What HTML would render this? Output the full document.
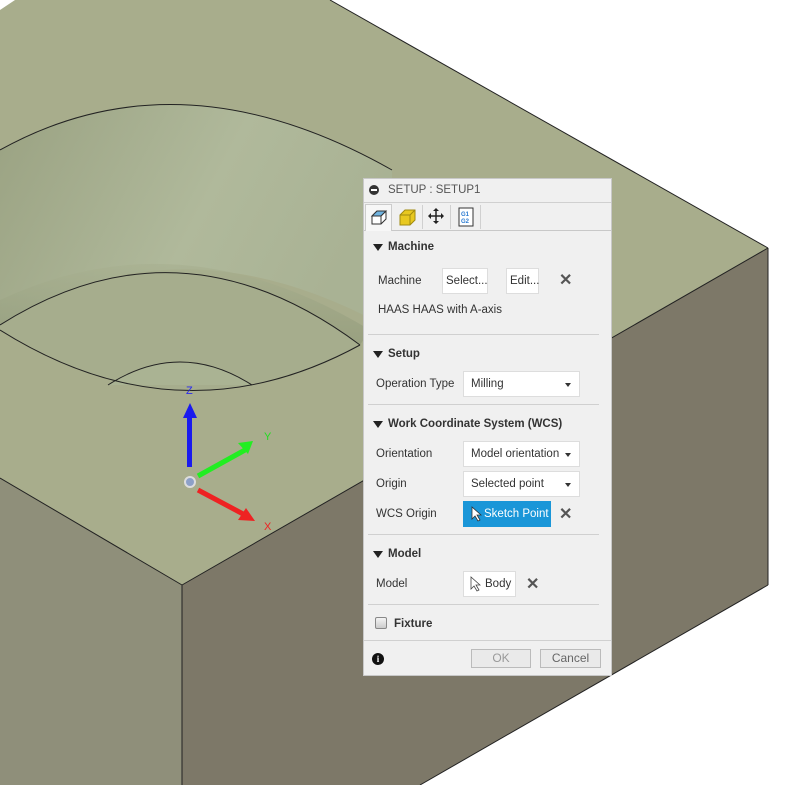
<!DOCTYPE html>
<html><head><meta charset="utf-8"><style>
*{margin:0;padding:0;box-sizing:border-box}
body{width:799px;height:785px;overflow:hidden;background:#fff;position:relative;font-family:"Liberation Sans",Arial,sans-serif;font-size:11.5px;color:#333}
.a{position:absolute;white-space:nowrap}
.t{line-height:14px}
.h{font-weight:bold;font-size:11.5px;color:#333}
.tri{position:absolute;width:0;height:0;border-left:5px solid transparent;border-right:5px solid transparent;border-top:7px solid #222}
.btn{position:absolute;background:#fff;border:1px solid #ddd;line-height:24px;padding-left:3px;color:#333}
.dd{position:absolute;background:#fff;border:1px solid #ddd;line-height:24px;padding-left:7px;color:#333}
.dd:after{content:"";position:absolute;right:8px;top:11px;border-left:3px solid transparent;border-right:3px solid transparent;border-top:4px solid #333}
.ln{position:absolute;left:368px;width:231px;height:1px;background:#d0d0d0}
.x{position:absolute;font-size:16px;color:#555;font-weight:bold;line-height:16px}
</style></head><body>
<svg class="a" style="left:0;top:0" width="799" height="785">
<defs>
<linearGradient id="g1" x1="0" y1="0" x2="1" y2="0.3"><stop offset="0" stop-color="#9aa282"/><stop offset="0.6" stop-color="#b0b99b"/><stop offset="1" stop-color="#a9b294"/></linearGradient>
<linearGradient id="g2" x1="0" y1="0" x2="0" y2="1"><stop offset="0" stop-color="#a8b090"/><stop offset="1" stop-color="#8f9878"/></linearGradient>
</defs>
<polygon points="15,0 330,0 768,248 182,585 0,478 0,10" fill="#a8ad8c"/>
<polygon points="0,478 182,585 182,785 0,785" fill="#8f8f7a"/>
<polygon points="182,585 768,248 768,585 420,785 182,785" fill="#7d7868"/>
<path d="M0,150 Q180,50 392,170 L392,330 Q180,211 0,325 Z" fill="url(#g1)"/>
<path d="M0,325 Q180,211 360,345 Q180,443 0,330 Z" fill="#a6ad8d"/>
<path d="M0,300 Q180,215 370,330 L360,345 Q180,211 0,325 Z" fill="url(#g2)" opacity="0.6"/>
<path d="M108,385 Q180,339 252,385 Z" fill="#aab393"/>
<line x1="330" y1="0" x2="768" y2="248" stroke="#222" stroke-width="1"/>
<line x1="0" y1="478" x2="182" y2="585" stroke="#222"/>
<line x1="182" y1="585" x2="768" y2="248" stroke="#222"/>
<line x1="182" y1="585" x2="182" y2="785" stroke="#222"/>
<line x1="768" y1="248" x2="768" y2="585" stroke="#222"/>
<line x1="768" y1="585" x2="420" y2="785" stroke="#222"/>
<path d="M0,150 Q180,50 392,170" fill="none" stroke="#222"/>
<path d="M0,325 Q180,211 360,345" fill="none" stroke="#222"/>
<path d="M0,330 Q180,443 360,345" fill="none" stroke="#222"/>
<path d="M108,385 Q180,339 252,385" fill="none" stroke="#222"/>
<rect x="187" y="415" width="5" height="52" fill="#1a1aee"/>
<polygon points="183,418 190,403 197,418" fill="#1a1aee"/>
<text x="186" y="394" font-size="11" fill="#2a2aee" font-family="Liberation Sans">Z</text>
<line x1="198" y1="476" x2="245" y2="450" stroke="#22ee22" stroke-width="5"/>
<polygon points="238,443 253,441 248,454" fill="#22ee22"/>
<text x="264" y="440" font-size="11" fill="#22dd22" font-family="Liberation Sans">Y</text>
<line x1="198" y1="490" x2="245" y2="515" stroke="#ee2222" stroke-width="5"/>
<polygon points="238,520 255,521 246,508" fill="#ee2222"/>
<text x="264" y="530" font-size="11" fill="#ee2222" font-family="Liberation Sans">X</text>
<circle cx="190" cy="482" r="5" fill="#8da0c8" stroke="#ddd" stroke-width="2"/>
</svg>

<div class="a" style="left:363px;top:178px;width:249px;height:498px;background:#f0f0f0;border:1px solid #c8c8c8"></div>
<div class="a" style="left:369px;top:185px;width:10px;height:10px;border-radius:50%;background:#333"></div>
<div class="a" style="left:371px;top:189px;width:6px;height:2px;background:#fff"></div>
<div class="a t" style="left:388px;top:183px;color:#555">SETUP : SETUP1</div>
<div class="a" style="left:364px;top:202px;width:247px;height:1px;background:#d0d0d0"></div>
<div class="a" style="left:364px;top:230px;width:247px;height:1px;background:#c8c8c8"></div>
<div class="a" style="left:365px;top:204px;width:27px;height:27px;background:#f7f7f7;border:1px solid #ccc;border-bottom:none"></div>
<div class="a" style="left:422px;top:205px;width:1px;height:24px;background:#d0d0d0"></div>
<div class="a" style="left:450px;top:205px;width:1px;height:24px;background:#d0d0d0"></div>
<div class="a" style="left:480px;top:205px;width:1px;height:24px;background:#d0d0d0"></div>
<svg class="a" style="left:369px;top:207px" width="20" height="20"><path d="M3,9 L8,4 L17,4 L17,12 L12,17 L3,17 Z M3,9 L12,9 L12,17 M12,9 L17,4" fill="#fff" stroke="#333"/><path d="M8,4 L17,4 L12,9 L3,9 Z" fill="#6fb3e0" stroke="#333"/></svg>
<svg class="a" style="left:398px;top:207px" width="20" height="20"><path d="M2,8 L7,3 L17,3 L17,13 L12,18 L2,18 Z" fill="#e8c820" stroke="#a08a10"/><path d="M2,8 L12,8 L17,3 M12,8 L12,18" fill="none" stroke="#a08a10"/></svg>
<svg class="a" style="left:427px;top:207px" width="18" height="18"><path d="M9,2 V16 M2,9 H16" stroke="#222" stroke-width="1.5"/><path d="M9,1 L6,4 H12 Z M9,17 L6,14 H12 Z M1,9 L4,6 V12 Z M17,9 L14,6 V12 Z" fill="#222"/></svg>
<svg class="a" style="left:458px;top:207px" width="16" height="20"><rect x="1" y="1" width="14" height="18" fill="#fff" stroke="#333"/><text x="3" y="9" font-size="6" fill="#2a7ad0" font-family="Liberation Sans" font-weight="bold">G1</text><text x="3" y="16" font-size="6" fill="#2a7ad0" font-family="Liberation Sans" font-weight="bold">G2</text></svg>

<div class="tri" style="left:373px;top:244px"></div>
<div class="a t h" style="left:388px;top:240px">Machine</div>
<div class="a t" style="left:378px;top:274px">Machine</div>
<div class="btn" style="left:442px;top:268px;width:46px;height:26px">Select...</div>
<div class="btn" style="left:506px;top:268px;width:33px;height:26px">Edit...</div>
<div class="x" style="left:559px;top:273px">✕</div>
<div class="a t" style="left:378px;top:303px">HAAS HAAS with A-axis</div>
<div class="ln" style="top:334px"></div>

<div class="tri" style="left:373px;top:351px"></div>
<div class="a t h" style="left:388px;top:347px">Setup</div>
<div class="a t" style="left:376px;top:377px">Operation Type</div>
<div class="dd" style="left:463px;top:371px;width:117px;height:26px">Milling</div>
<div class="ln" style="top:404px"></div>

<div class="tri" style="left:373px;top:421px"></div>
<div class="a t h" style="left:388px;top:417px">Work Coordinate System (WCS)</div>
<div class="a t" style="left:376px;top:447px">Orientation</div>
<div class="dd" style="left:463px;top:441px;width:117px;height:26px">Model orientation</div>
<div class="a t" style="left:376px;top:477px">Origin</div>
<div class="dd" style="left:463px;top:471px;width:117px;height:26px">Selected point</div>
<div class="a t" style="left:376px;top:507px">WCS Origin</div>
<div class="a" style="left:463px;top:501px;width:88px;height:26px;background:#1a96d8;color:#fff;line-height:26px;padding-left:21px">Sketch Point</div>
<svg class="a" style="left:470px;top:506px" width="12" height="16"><path d="M2,1 L2,13 L5,10 L8,15 L10,14 L7,9 L11,9 Z" fill="#fff" stroke="#333" stroke-width="0.8"/></svg>
<div class="x" style="left:559px;top:507px">✕</div>
<div class="ln" style="top:534px"></div>

<div class="tri" style="left:373px;top:551px"></div>
<div class="a t h" style="left:388px;top:547px">Model</div>
<div class="a t" style="left:376px;top:577px">Model</div>
<div class="btn" style="left:463px;top:571px;width:53px;height:26px;padding-left:21px">Body</div>
<svg class="a" style="left:469px;top:576px" width="12" height="16"><path d="M2,1 L2,13 L5,10 L8,15 L10,14 L7,9 L11,9 Z" fill="#fff" stroke="#444" stroke-width="0.8"/></svg>
<div class="x" style="left:526px;top:577px">✕</div>
<div class="ln" style="top:604px"></div>

<div class="a" style="left:375px;top:617px;width:12px;height:12px;border:1px solid #888;border-radius:2px;background:linear-gradient(#f4f4f4,#ccc)"></div>
<div class="a t h" style="left:394px;top:617px">Fixture</div>
<div class="a" style="left:364px;top:640px;width:247px;height:1px;background:#d0d0d0"></div>
<div class="a" style="left:372px;top:653px;width:12px;height:12px;border-radius:50%;background:#111;color:#fff;font-size:9px;font-weight:bold;text-align:center;line-height:12px;font-family:'Liberation Serif',serif">i</div>
<div class="a" style="left:471px;top:649px;width:60px;height:19px;border:1px solid #bbb;background:#eaeaea;color:#999;text-align:center;line-height:17px;font-size:12px">OK</div>
<div class="a" style="left:540px;top:649px;width:61px;height:19px;border:1px solid #bbb;background:#eaeaea;color:#666;text-align:center;line-height:17px;font-size:12px">Cancel</div>
</body></html>
